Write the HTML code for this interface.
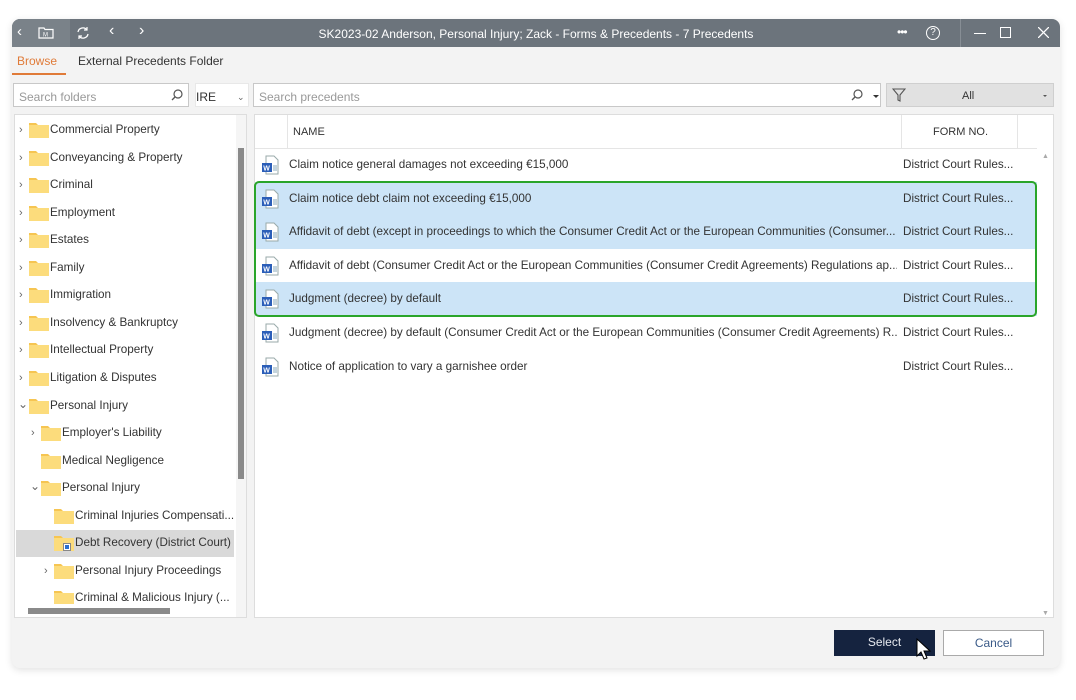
<!DOCTYPE html>
<html><head><meta charset="utf-8"><style>
*{margin:0;padding:0;box-sizing:border-box}
body{width:1076px;height:700px;background:#fff;font-family:"Segoe UI","Liberation Sans",sans-serif;font-size:12px;color:#333;position:relative;overflow:hidden}
.a{position:absolute}
.win{left:12px;top:19px;width:1048px;height:649px;background:#f3f3f3;border-radius:8px;box-shadow:0 2px 8px rgba(0,0,0,.12);overflow:hidden}
.title{left:0;top:0;width:1048px;height:28px;background:#6c747c;color:#fff}
.t{white-space:nowrap;line-height:16px}
.fold{width:20px;height:17px}
.sel{background:#cce4f7}
.chev{color:#666;font-size:11px}
.nm{font-size:11.7px;overflow:hidden;width:608px}
</style></head><body>
<div class="a win">
 <div class="a title">
  <div class="a" style="left:0;top:0;width:58px;height:28px;background:#7a8289"></div>
  <div class="a t" style="left:5px;top:5px;font-size:15px">‹</div>
  <svg class="a" style="left:26px;top:7px" width="16" height="13" viewBox="0 0 16 13"><path d="M1 2h5l1 1.5h8v8.5H1z" fill="none" stroke="#fff" stroke-width="1.2"/><text x="5" y="10.5" font-size="6" fill="#fff" font-family="Liberation Sans">M</text></svg>
  <svg class="a" style="left:64px;top:7px" width="14" height="14" viewBox="0 0 14 14"><path d="M2 6a5 5 0 0 1 9-2M12 8a5 5 0 0 1-9 2" fill="none" stroke="#fff" stroke-width="1.3"/><path d="M11 1v3h-3M3 13v-3h3" fill="none" stroke="#fff" stroke-width="1.2"/></svg>
  <div class="a t" style="left:97px;top:4px;font-size:16px">‹</div>
  <div class="a t" style="left:127px;top:4px;font-size:16px">›</div>
  <div class="a t" style="left:0;width:1048px;text-align:center;top:7px;font-size:12px">SK2023-02 Anderson, Personal Injury; Zack - Forms &amp; Precedents - 7 Precedents</div>
  <div class="a t" style="left:885px;top:5px;font-size:12px;letter-spacing:-1px">•••</div>
  <div class="a" style="left:914px;top:7px;width:14px;height:14px;border:1.3px solid #fff;border-radius:50%;font-size:10px;text-align:center;line-height:11px">?</div>
  <div class="a" style="left:948px;top:0;width:1px;height:28px;background:#878e95"></div>
  <div class="a" style="left:962px;top:14px;width:12px;height:1.3px;background:#fff"></div>
  <div class="a" style="left:988px;top:8px;width:11px;height:11px;border:1.3px solid #fff"></div>
  <svg class="a" style="left:1026px;top:8px" width="11" height="11"><path d="M0 0L11 11M11 0L0 11" stroke="#fff" stroke-width="1.3"/></svg>
 </div>
 <div class="a t" style="left:5px;top:34px;color:#e07b39">Browse</div>
 <div class="a" style="left:0;top:54px;width:54px;height:2px;background:#e07b39"></div>
 <div class="a t" style="left:66px;top:34px;color:#333">External Precedents Folder</div>
 <div class="a" style="left:1px;top:64px;width:176px;height:24px;background:#fff;border:1px solid #c8c8c8"></div>
 <div class="a t" style="left:7px;top:70px;color:#999">Search folders</div>
 <svg class="a" style="left:159px;top:70px" width="12" height="12"><circle cx="7" cy="5" r="4" fill="none" stroke="#555" stroke-width="1.2"/><path d="M4 8L1 11" stroke="#555" stroke-width="1.3"/></svg>
 <div class="a" style="left:183px;top:64px;width:54px;height:24px;background:#fff;border:1px solid #e8e8e8"></div>
 <div class="a t" style="left:184px;top:70px;color:#333">IRE</div>
 <div class="a t chev" style="left:225px;top:70px;font-size:9px">⌄</div>
 <div class="a" style="left:241px;top:64px;width:628px;height:24px;background:#fff;border:1px solid #c8c8c8"></div>
 <div class="a t" style="left:247px;top:70px;color:#999">Search precedents</div>
 <svg class="a" style="left:839px;top:70px" width="12" height="12"><circle cx="7" cy="5" r="4" fill="none" stroke="#555" stroke-width="1.2"/><path d="M4 8L1 11" stroke="#555" stroke-width="1.3"/></svg>
 <div class="a" style="left:861px;top:76px;border:3px solid transparent;border-top:3px solid #333"></div>
 <div class="a" style="left:874px;top:64px;width:168px;height:24px;background:#e1e1e1;border:1px solid #cfcfcf"></div>
 <svg class="a" style="left:880px;top:69px" width="14" height="14"><path d="M1 1h12l-5 6v6l-2-1V7z" fill="none" stroke="#555" stroke-width="1.1"/></svg>
 <div class="a t" style="left:950px;top:69px;font-size:11px">All</div>
 <div class="a" style="left:1031px;top:76px;border:2.5px solid transparent;border-top:2.5px solid #555"></div>
 <div class="a" style="left:2px;top:95px;width:233px;height:504px;background:#fff;border:1px solid #ddd;overflow:hidden">
  <div class="a" style="left:1px;top:415px;width:218px;height:27px;background:#d9d9d9"></div>
  <div id="tree" class="a" style="left:-2px;top:-95px;width:240px;height:600px"></div>
 </div>
 <div class="a" style="left:224px;top:96px;width:10px;height:502px;background:#f5f5f5"></div>
 <div class="a" style="left:226px;top:129px;width:6px;height:331px;background:#8a8a8a"></div>
 <div class="a" style="left:3px;top:585px;width:220px;height:13px;background:#fff"></div>
 <div class="a" style="left:16px;top:589px;width:142px;height:6px;background:#8a8a8a"></div>
 <div class="a" style="left:242px;top:95px;width:800px;height:504px;background:#fff;border:1px solid #ddd"></div>
 <div class="a" style="left:275px;top:96px;width:1px;height:33px;background:#e5e5e5"></div>
 <div class="a" style="left:889px;top:96px;width:1px;height:33px;background:#e5e5e5"></div>
 <div class="a" style="left:1005px;top:96px;width:1px;height:33px;background:#e5e5e5"></div>
 <div class="a" style="left:243px;top:129px;width:782px;height:1px;background:#e5e5e5"></div>
 <div class="a t" style="left:281px;top:105px;font-size:11px;color:#333">NAME</div>
 <div class="a t" style="left:921px;top:105px;font-size:11px;color:#333">FORM NO.</div>
 <div class="a t" style="left:1030px;top:130px;font-size:7px;color:#aaa">▲</div>
 <div class="a t" style="left:1030px;top:587px;font-size:7px;color:#aaa">▼</div>
 <div id="rows"></div>
 <div class="a" style="left:242px;top:162px;width:783px;height:136px;border:2px solid #2aa52a;border-radius:5px"></div>
 <div class="a" style="left:822px;top:611px;width:101px;height:26px;background:#15233f;color:#e6e9ef;text-align:center;line-height:25px">Select</div>
 <div class="a" style="left:931px;top:611px;width:101px;height:26px;background:#fff;border:1px solid #aaa;color:#3a5a88;text-align:center;line-height:24px">Cancel</div>
 <svg class="a" style="left:904px;top:619px" width="16" height="24" viewBox="0 0 16 24"><path d="M1 1v17l4-4 3 7 3-1-3-7h6z" fill="#fff" stroke="#000" stroke-width="1"/></svg>
</div>
<script>
var F='<svg class="a fold" viewBox="0 0 20 17"><path d="M0 2h7l2 2h11v13H0z" fill="#f6c552"/><rect x="0" y="4" width="20" height="13" fill="#fcdc7c"/></svg>';
var items=[[0,1,'Commercial Property'],[0,1,'Conveyancing & Property'],[0,1,'Criminal'],[0,1,'Employment'],[0,1,'Estates'],[0,1,'Family'],[0,1,'Immigration'],[0,1,'Insolvency & Bankruptcy'],[0,1,'Intellectual Property'],[0,1,'Litigation & Disputes'],[0,2,'Personal Injury'],[1,1,"Employer's Liability"],[1,0,'Medical Negligence'],[1,2,'Personal Injury'],[2,0,'Criminal Injuries Compensati...'],[2,3,'Debt Recovery (District Court)'],[2,1,'Personal Injury Proceedings'],[2,0,'Criminal & Malicious Injury (...']];
var h='';
items.forEach(function(it,i){var y=110+i*27.55;var x=[16,28,41][it[0]];
if(it[1]==1)h+='<div class="a t chev" style="left:'+(x-10)+'px;top:'+(y-8)+'px">›</div>';
if(it[1]==2)h+='<div class="a t chev" style="left:'+(x-11)+'px;top:'+(y-10)+'px;font-size:12px">⌄</div>';
h+=F.replace('class="a fold"','class="a fold" style="left:'+x+'px;top:'+(y-9)+'px"');
if(it[1]==3)h+='<div class="a" style="left:'+(x+9)+'px;top:'+(y)+'px;width:8px;height:8px;background:#fff;border:1px solid #888"><div style="width:4px;height:4px;background:#2a6fd0;margin:1px"></div></div>';
h+='<div class="a t" style="font-size:11.7px;left:'+(x+21)+'px;top:'+(y-8)+'px;color:#333">'+it[2].replace('&','&amp;')+'</div>';});
document.getElementById('tree').innerHTML=h;
var W='<svg class="a" width="20" height="20" viewBox="0 0 20 20"><path d="M5 1h8l4 4v14H5z" fill="#fff" stroke="#9aa" stroke-width="1"/><rect x="1" y="8" width="10" height="9" fill="#2b5eb8"/><text x="2.3" y="15.5" font-size="7" font-weight="bold" fill="#fff" font-family="Liberation Sans">W</text><path d="M12 11h4M12 13h4M12 15h4" stroke="#8ab" stroke-width="1"/></svg>';
var rows=[[0,'Claim notice general damages not exceeding €15,000'],[1,'Claim notice debt claim not exceeding €15,000'],[1,'Affidavit of debt (except in proceedings to which the Consumer Credit Act or the European Communities (Consumer...'],[0,'Affidavit of debt (Consumer Credit Act or the European Communities (Consumer Credit Agreements) Regulations ap...'],[1,'Judgment (decree) by default'],[0,'Judgment (decree) by default (Consumer Credit Act or the European Communities (Consumer Credit Agreements) R...'],[0,'Notice of application to vary a garnishee order']];
h='';rows.forEach(function(r,i){var y=129+i*33.6;
h+='<div class="a'+(r[0]?' sel':'')+'" style="left:243px;top:'+y+'px;height:33.6px;width:782px"></div>';
h+=W.replace('class="a"','class="a" style="left:249px;top:'+(y+7)+'px"');
h+='<div class="a t nm" style="left:277px;top:'+(y+9)+'px;color:#333">'+r[1]+'</div>';
h+='<div class="a t" style="font-size:11.7px;left:891px;top:'+(y+9)+'px;color:#333">District Court Rules...</div>';});
document.getElementById('rows').innerHTML=h;
</script>
</body></html>
